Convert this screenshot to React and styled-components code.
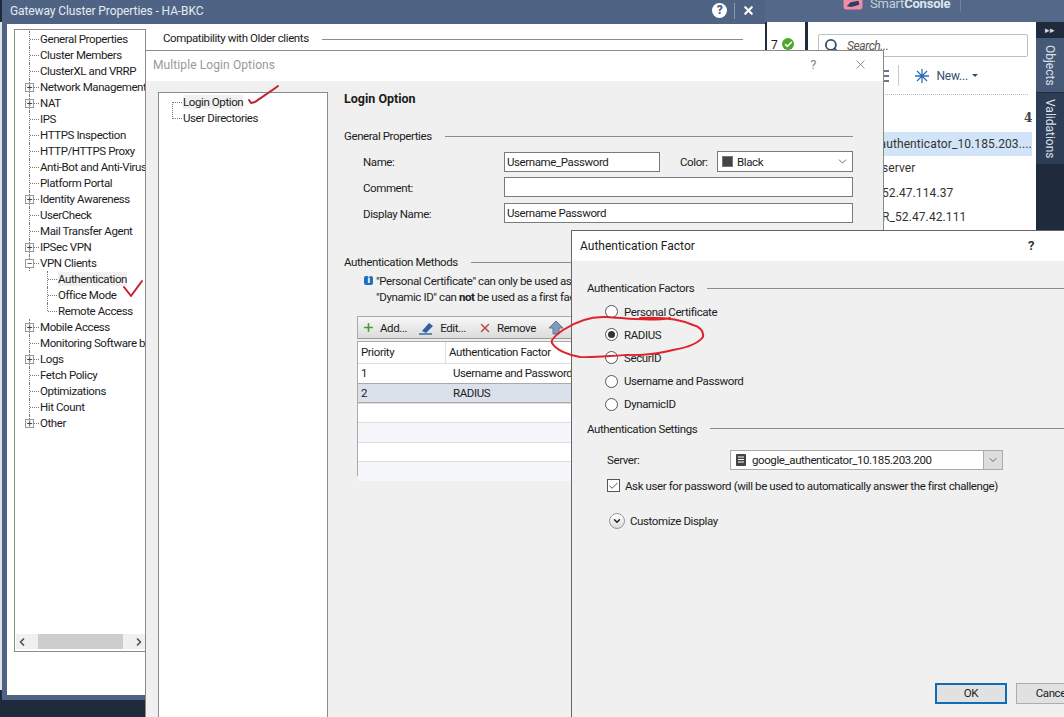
import React from 'react';
import styled, { createGlobalStyle } from 'styled-components';
import { Plus, X, Search, Check, ChevronDown, ChevronLeft, ChevronRight } from 'lucide-react';

const treeItems = [
  { label: 'General Properties' },
  { label: 'Cluster Members' },
  { label: 'ClusterXL and VRRP' },
  { label: 'Network Management', box: '+' },
  { label: 'NAT', box: '+' },
  { label: 'IPS' },
  { label: 'HTTPS Inspection' },
  { label: 'HTTP/HTTPS Proxy' },
  { label: 'Anti-Bot and Anti-Virus' },
  { label: 'Platform Portal' },
  { label: 'Identity Awareness', box: '+' },
  { label: 'UserCheck' },
  { label: 'Mail Transfer Agent' },
  { label: 'IPSec VPN', box: '+' },
  { label: 'VPN Clients', box: '-' },
  { label: 'Authentication', child: true, selected: true },
  { label: 'Office Mode', child: true },
  { label: 'Remote Access', child: true, last: true },
  { label: 'Mobile Access', box: '+' },
  { label: 'Monitoring Software blade' },
  { label: 'Logs', box: '+' },
  { label: 'Fetch Policy' },
  { label: 'Optimizations' },
  { label: 'Hit Count' },
  { label: 'Other', box: '+', last: true },
];

const factors = ['Personal Certificate', 'RADIUS', 'SecurID', 'Username and Password', 'DynamicID'];

const App = () => {
  return (
    <Desktop>
      <GlobalStyle />
      <BackdropEdge />

      <ConsoleWindow>
        <ConsoleHeader>
          <Logo viewBox="0 0 24 14">
            <rect x="0" y="-6" width="24" height="18" rx="3" fill="#f28ca8" />
            <path d="M4 8 L9 3 L19 1 L20 6 L10 9 Z" fill="#2c3f66" />
          </Logo>
          <Brand>Smart<b>Console</b></Brand>
          <HeaderDivider />
        </ConsoleHeader>
        <ConsoleBody>
          <StatusStrip>
            7
            <StatusDot><Check size={9} strokeWidth={4} color="#fff" /></StatusDot>
          </StatusStrip>
          <ObjectsPanel>
            <SearchBox>
              <Search size={15} strokeWidth={3} color="#34506e" />
              <SearchHint>Search...</SearchHint>
            </SearchBox>
            <ObjectsToolbar>
              <ListIcon viewBox="0 0 16 12">
                <path d="M1 1h2M1 6h2M1 11h2M6 1h10M6 6h10M6 11h10" stroke="#34506e" strokeWidth="1.4" />
              </ListIcon>
              <ToolbarDivider />
              <BurstIcon viewBox="0 0 14 14">
                <path d="M7 0v14M0 7h14M2 2l10 10M12 2L2 12" stroke="#2f6fb0" strokeWidth="1.3" />
              </BurstIcon>
              <NewLabel>New...</NewLabel>
              <NewCaret />
            </ObjectsToolbar>
            <CountRow>4</CountRow>
            <ObjectRow $active>google_authenticator_10.185.203....</ObjectRow>
            <ObjectRow>radius_server</ObjectRow>
            <ObjectRow>radius_52.47.114.37</ObjectRow>
            <ObjectRow>radius_R_52.47.42.111</ObjectRow>
          </ObjectsPanel>
          <SideTabs>
            <SideArrows>▸▸</SideArrows>
            <SideTab $active $height={55}>Objects</SideTab>
            <SideTab $height={72}>Validations</SideTab>
          </SideTabs>
        </ConsoleBody>
      </ConsoleWindow>

      <GatewayWindow>
        <GatewayTitleBar>
          <GatewayTitle>Gateway Cluster Properties - HA-BKC</GatewayTitle>
          <TitleActions>
            <HelpCircle>?</HelpCircle>
            <TitleDivider />
            <X size={13} strokeWidth={4} color="#fff" />
          </TitleActions>
        </GatewayTitleBar>
        <GatewayBody>
          <TreePanel>
            <TreeList>
              {treeItems.map((item) => (
                <TreeRow key={item.label} $child={item.child} $last={item.last}>
                  {item.box && <TreeBox>{item.box === '+' ? '+' : '−'}</TreeBox>}
                  <TreeLabel $selected={item.selected}>{item.label}</TreeLabel>
                </TreeRow>
              ))}
            </TreeList>
            <ScrollBar>
              <ChevronLeft size={12} strokeWidth={3.5} color="#555" />
              <ScrollThumb />
              <ChevronRight size={12} strokeWidth={3.5} color="#555" />
            </ScrollBar>
          </TreePanel>
          <GatewayContent>
            <GatewayHeading>Compatibility with Older clients</GatewayHeading>
            <SectionLine />
          </GatewayContent>
        </GatewayBody>
      </GatewayWindow>

      <LoginWindow>
        <WhiteTitleBar $lift={3}>
          <LoginTitle>Multiple Login Options</LoginTitle>
          <LoginActions>
            <span>?</span>
            <X size={15} strokeWidth={1} color="#555" />
          </LoginActions>
        </WhiteTitleBar>
        <LoginBody>
          <LoginTree>
            <LoginTreeRow><LoginTreeLabel $selected>Login Option</LoginTreeLabel></LoginTreeRow>
            <LoginTreeRow><LoginTreeLabel>User Directories</LoginTreeLabel></LoginTreeRow>
          </LoginTree>
          <LoginContent>
            <PageHeading>Login Option</PageHeading>
            <SectionHeader $top={22}>
              General Properties
              <SectionLine />
            </SectionHeader>
            <FormRow $top={7}>
              <FormLabel>Name:</FormLabel>
              <TextField $width={156}>Username_Password</TextField>
              <ColorLabel>Color:</ColorLabel>
              <ColorSelect>
                <Swatch />
                Black
                <ChevronDown size={13} strokeWidth={1.4} color="#444" />
              </ColorSelect>
            </FormRow>
            <FormRow $top={5}>
              <FormLabel>Comment:</FormLabel>
              <TextField />
            </FormRow>
            <FormRow $top={6}>
              <FormLabel>Display Name:</FormLabel>
              <TextField>Username Password</TextField>
            </FormRow>
            <SectionHeader $top={31}>
              Authentication Methods
              <SectionLine />
            </SectionHeader>
            <InfoBlock>
              <InfoIcon>i</InfoIcon>
              <div>
                "Personal Certificate" can only be used as a first factor<br />
                "Dynamic ID" can <b>not</b> be used as a first factor
              </div>
            </InfoBlock>
            <MethodsToolbar>
              <ToolButton>
                <Plus size={13} strokeWidth={3} color="#4d9a35" />
                Add...
              </ToolButton>
              <ToolButton>
                <PencilIcon viewBox="0 0 16 14">
                  <path d="M3 10 L10 2 L14 5 L7 12 Z" fill="#2f5f9e" />
                  <path d="M0 13h13" stroke="#2f5f9e" strokeWidth="1.4" />
                </PencilIcon>
                Edit...
              </ToolButton>
              <ToolButton>
                <X size={14} strokeWidth={2.4} color="#b5483c" />
                Remove
              </ToolButton>
              <UpIcon viewBox="0 0 16 16">
                <path d="M8 1 L15 8 H11 V14 H5 V8 H1 Z" fill="#7f9cc0" stroke="#64748a" />
              </UpIcon>
            </MethodsToolbar>
            <MethodsTable>
              <TableHead>
                <PriorityCell $head>Priority</PriorityCell>
                <FactorCell $head>Authentication Factor</FactorCell>
              </TableHead>
              <TableRow>
                <PriorityCell>1</PriorityCell>
                <FactorCell>Username and Password</FactorCell>
              </TableRow>
              <TableRow $selected>
                <PriorityCell>2</PriorityCell>
                <FactorCell>RADIUS</FactorCell>
              </TableRow>
              <TableRow />
              <TableRow $alt />
              <TableRow />
              <TableRow $alt />
            </MethodsTable>
          </LoginContent>
        </LoginBody>
      </LoginWindow>

      <FactorWindow>
        <WhiteTitleBar $lift={1}>
          <FactorTitle>Authentication Factor</FactorTitle>
          <FactorHelp>?</FactorHelp>
        </WhiteTitleBar>
        <FactorBody>
          <SectionHeader $top={19}>
            Authentication Factors
            <SectionLine />
          </SectionHeader>
          <RadioList>
            {factors.map((name) => (
              <RadioRow key={name}>
                <Radio $checked={name === 'RADIUS'} />
                {name}
              </RadioRow>
            ))}
          </RadioList>
          <SectionHeader $top={5}>
            Authentication Settings
            <SectionLine />
          </SectionHeader>
          <ServerRow>
            <ServerLabel>Server:</ServerLabel>
            <ServerSelect>
              <ServerValue>
                <DocIcon viewBox="0 0 10 12">
                  <rect width="10" height="12" rx="1" fill="#444" />
                  <path d="M2 3h6M2 5.5h6M2 8h6" stroke="#fff" />
                </DocIcon>
                google_authenticator_10.185.203.200
              </ServerValue>
              <ComboButton>
                <ChevronDown size={12} strokeWidth={1.5} color="#444" />
              </ComboButton>
            </ServerSelect>
          </ServerRow>
          <CheckRow>
            <CheckBox>
              <Check size={12} strokeWidth={1.8} color="#333" />
            </CheckBox>
            Ask user for password (will be used to automatically answer the first challenge)
          </CheckRow>
          <CustomizeRow>
            <RoundToggle>
              <ChevronDown size={10} strokeWidth={3.5} color="#222" />
            </RoundToggle>
            Customize Display
          </CustomizeRow>
          <FooterButtons>
            <DialogButton $primary>OK</DialogButton>
            <DialogButton>Cancel</DialogButton>
          </FooterButtons>
        </FactorBody>
      </FactorWindow>

      <InkLayer viewBox="0 0 1064 717">
        <InkPath d="M249 100 L251 103 L255 102 C262 97 270 92 278 86" />
        <InkPath d="M124 287 L131 296 L142 281" />
        <InkPath d="M670 318 C650 322 625 318 607 317 C590 316 575 322 563 330 C556 335 550 340 552 343 C556 350 568 355 580 357 C600 358 620 354 640 355 C655 354 665 352 673 350 C685 348 697 345 703 337 C704 330 698 326 693 325 C680 319 660 317 640 318" $red />
      </InkLayer>
    </Desktop>
  );
};

export default App;

const GlobalStyle = createGlobalStyle`
  html, body {
    margin: 0;
    padding: 0;
    overflow: hidden;
  }
  body {
    font-family: "Roboto", "Open Sans", sans-serif;
    font-size: 11.5px;
    letter-spacing: -0.4px;
    color: #1c1c1c;
  }
`;

const Desktop = styled.div`
  background: #1f2a3c;
  height: 717px;
  overflow: hidden;
  position: relative;
  width: 1064px;
`;

const BackdropEdge = styled.div`
  background: #dfe3e8;
  height: 668px;
  left: 0;
  position: absolute;
  top: 22px;
  width: 2px;
`;

const GatewayWindow = styled.div`
  background: #4f6485;
  display: flex;
  flex-direction: column;
  height: 700px;
  left: 2px;
  padding: 0 0 5px 5px;
  box-sizing: border-box;
  position: absolute;
  top: 0;
  width: 763px;
`;

const GatewayTitleBar = styled.div`
  align-items: center;
  box-sizing: border-box;
  display: flex;
  flex: 0 0 24px;
  justify-content: space-between;
  padding: 0 10px 3px 3px;
`;

const GatewayTitle = styled.div`
  color: #e6ebf1;
  font-size: 12px;
  letter-spacing: -0.1px;
`;

const TitleActions = styled.div`
  align-items: center;
  display: flex;
  gap: 7px;
`;

const HelpCircle = styled.div`
  background: #fff;
  border-radius: 50%;
  color: #4f6485;
  font-size: 12px;
  font-weight: 900;
  height: 15px;
  line-height: 15px;
  text-align: center;
  width: 15px;
`;

const TitleDivider = styled.div`
  background: #8a9ab2;
  height: 16px;
  width: 1px;
`;

const GatewayBody = styled.div`
  background: #fff;
  display: flex;
  flex: 1;
  padding: 5px 0 0 7px;
`;

const TreePanel = styled.div`
  border: 1px solid #8a8a8a;
  box-sizing: border-box;
  display: flex;
  flex-direction: column;
  height: 623px;
  overflow: hidden;
  width: 132px;
`;

const TreeList = styled.div`
  flex: 1;
  padding-top: 1px;
`;

const TreeRow = styled.div`
  align-items: center;
  display: flex;
  height: 16px;
  padding-left: ${(p) => (p.$child ? '43px' : '25px')};
  position: relative;
  white-space: nowrap;

  &::before {
    border-left: 1px dotted #777;
    bottom: ${(p) => (p.$last ? '8px' : '0')};
    content: '';
    left: ${(p) => (p.$child ? '32px' : '14px')};
    position: absolute;
    top: 0;
  }

  &::after {
    border-top: 1px dotted #777;
    content: '';
    left: ${(p) => (p.$child ? '33px' : '15px')};
    position: absolute;
    top: 8px;
    width: 9px;
  }
`;

const TreeBox = styled.span`
  background: #fff;
  border: 1px solid #999;
  box-sizing: border-box;
  color: #345;
  font-size: 10px;
  height: 9px;
  left: 10px;
  line-height: 7px;
  position: absolute;
  text-align: center;
  top: 4px;
  width: 9px;
  z-index: 1;
`;

const TreeLabel = styled.span`
  background: ${(p) => (p.$selected ? '#f0f0f0' : 'transparent')};
`;

const ScrollBar = styled.div`
  align-items: center;
  background: #f0f0f0;
  display: flex;
  flex: 0 0 15px;
  justify-content: space-between;
  margin: 0 0 2px 1px;
`;

const ScrollThumb = styled.div`
  background: #cdcdcd;
  flex: 0 0 85px;
  height: 15px;
`;

const GatewayContent = styled.div`
  align-items: flex-start;
  display: flex;
  flex: 1;
  height: 16px;
  padding: 2px 22px 0 17px;
`;

const GatewayHeading = styled.div`
  white-space: nowrap;
`;

const SectionLine = styled.div`
  align-self: center;
  background: #8c8c8c;
  flex: 1;
  height: 1px;
  margin-left: 13px;
`;

const ConsoleWindow = styled.div`
  background: #1f2a3c;
  display: flex;
  flex-direction: column;
  height: 240px;
  left: 765px;
  position: absolute;
  top: 0;
  width: 299px;
`;

const ConsoleHeader = styled.div`
  align-items: flex-start;
  background: #54698a;
  display: flex;
  flex: 0 0 22px;
  padding-left: 76px;
`;

const Logo = styled.svg`
  height: 11px;
  width: 24px;
`;

const Brand = styled.div`
  color: #c3cfdd;
  font-size: 13px;
  letter-spacing: -0.2px;
  line-height: 8px;
  margin-left: 5px;

  b {
    color: #dfe6ee;
  }
`;

const HeaderDivider = styled.div`
  background: #6f829e;
  height: 12px;
  margin-left: 10px;
  width: 1px;
`;

const ConsoleBody = styled.div`
  display: flex;
  flex: 1;
  padding-left: 2px;
`;

const StatusStrip = styled.div`
  align-items: flex-start;
  background: #fff;
  box-sizing: border-box;
  display: flex;
  flex: 0 0 38px;
  font-size: 12px;
  gap: 5px;
  margin-right: 3px;
  padding: 16px 0 0 4px;
`;

const StatusDot = styled.span`
  align-items: center;
  background: #4ba82a;
  border-radius: 50%;
  display: flex;
  height: 12px;
  justify-content: center;
  width: 12px;
`;

const ObjectsPanel = styled.div`
  background: #fff;
  box-sizing: border-box;
  display: flex;
  flex: 0 0 228px;
  flex-direction: column;
  min-width: 0;
  padding-top: 12px;
`;

const SearchBox = styled.div`
  align-items: center;
  border: 1px solid #b9c0c8;
  border-radius: 2px;
  box-sizing: border-box;
  display: flex;
  gap: 8px;
  height: 23px;
  margin: 0 8px 0 10px;
  padding-left: 5px;
`;

const SearchHint = styled.span`
  color: #555;
  font-size: 12px;
  font-style: italic;
`;

const ObjectsToolbar = styled.div`
  align-items: center;
  border-bottom: 1px dotted #bbb;
  display: flex;
  gap: 7px;
  height: 37px;
  justify-content: flex-end;
  margin: 0 8px 0 10px;
  padding-right: 50px;
`;

const ListIcon = styled.svg`
  height: 12px;
  margin-right: 2px;
  width: 16px;
`;

const ToolbarDivider = styled.div`
  background: #c5cbd2;
  height: 21px;
  margin-right: 9px;
  width: 1px;
`;

const BurstIcon = styled.svg`
  height: 14px;
  width: 14px;
`;

const NewLabel = styled.span`
  color: #34506e;
  font-size: 12px;
  letter-spacing: -0.2px;
`;

const NewCaret = styled.span`
  border-left: 3px solid transparent;
  border-right: 3px solid transparent;
  border-top: 3px solid #34506e;
  margin-left: -3px;
`;

const CountRow = styled.div`
  color: #444;
  font-family: "DejaVu Serif", serif;
  font-size: 12px;
  font-weight: 700;
  height: 37px;
  line-height: 46px;
  padding-right: 4px;
  text-align: right;
`;

const ObjectRow = styled.div`
  background: ${(p) => (p.$active ? '#d2e4f8' : 'transparent')};
  box-sizing: border-box;
  color: #333;
  flex: 0 0 24.4px;
  font-size: 12px;
  letter-spacing: 0.1px;
  line-height: 25px;
  margin-right: 4px;
  overflow: hidden;
  padding-left: ${(p) => (p.$active ? '29px' : '35px')};
  white-space: nowrap;
`;

const SideTabs = styled.div`
  display: flex;
  flex: 1;
  flex-direction: column;
`;

const SideArrows = styled.div`
  color: #d5dce5;
  font-size: 9px;
  height: 16px;
  line-height: 16px;
  text-align: center;
`;

const SideTab = styled.div`
  background: ${(p) => (p.$active ? '#465a78' : '#2c3d55')};
  border-bottom: 1px solid #1f2a3c;
  box-sizing: border-box;
  color: #d9e0e8;
  font-size: 12px;
  height: ${(p) => p.$height}px;
  letter-spacing: 0;
  line-height: 28px;
  text-align: center;
  writing-mode: vertical-rl;
`;

const LoginWindow = styled.div`
  background: #f0f0f0;
  border: 1px solid #8a8a8a;
  box-sizing: border-box;
  display: flex;
  flex-direction: column;
  height: 680px;
  left: 145px;
  position: absolute;
  top: 50px;
  width: 739px;
`;

const WhiteTitleBar = styled.div`
  align-items: center;
  background: #fff;
  box-sizing: border-box;
  display: flex;
  flex: 0 0 30px;
  justify-content: space-between;
  padding-bottom: ${(p) => p.$lift}px;
`;

const LoginTitle = styled.div`
  color: #999;
  font-size: 12px;
  letter-spacing: 0.1px;
  padding-left: 7px;
`;

const LoginActions = styled.div`
  align-items: center;
  color: #888;
  display: flex;
  font-size: 13px;
  gap: 37px;
  padding-right: 15px;
`;

const LoginBody = styled.div`
  display: flex;
  flex: 1;
  padding: 11px 30px 0 12px;
`;

const LoginTree = styled.div`
  background: #fff;
  border: 1px solid #8a8a8a;
  box-sizing: border-box;
  flex: 0 0 170px;
  padding-top: 1px;
`;

const LoginTreeRow = styled.div`
  align-items: center;
  display: flex;
  height: 16px;
  padding-left: 24px;
  position: relative;

  &::before {
    border-left: 1px dotted #777;
    border-top: 1px dotted #777;
    content: '';
    height: 8px;
    left: 13px;
    position: absolute;
    top: 8px;
    width: 9px;
  }

  & + &::before {
    border-left: 1px dotted #777;
    border-top: 0;
    border-bottom: 1px dotted #777;
    top: 0;
  }
`;

const LoginTreeLabel = styled.span`
  background: ${(p) => (p.$selected ? '#f0f0f0' : 'transparent')};
`;

const LoginContent = styled.div`
  display: flex;
  flex: 1;
  flex-direction: column;
  padding-left: 16px;
`;

const PageHeading = styled.div`
  font-size: 12.5px;
  font-weight: 700;
  letter-spacing: 0;
  line-height: 14px;
`;

const SectionHeader = styled.div`
  align-items: center;
  display: flex;
  height: 16px;
  margin-top: ${(p) => p.$top}px;
  white-space: nowrap;
`;

const FormRow = styled.div`
  align-items: center;
  display: flex;
  margin-top: ${(p) => p.$top}px;
  padding-left: 19px;
`;

const FormLabel = styled.div`
  flex: 0 0 141px;
  padding-top: 1px;
`;

const TextField = styled.div`
  background: #fff;
  border: 1px solid #7a7a7a;
  box-sizing: border-box;
  flex: ${(p) => (p.$width ? `0 0 ${p.$width}px` : '1')};
  height: 20px;
  line-height: 18px;
  padding-left: 2px;
`;

const ColorLabel = styled.div`
  flex: 0 0 37px;
  margin-left: 20px;
`;

const ColorSelect = styled.div`
  align-items: center;
  background: #fff;
  border: 1px solid #7a7a7a;
  box-sizing: border-box;
  display: flex;
  flex: 1;
  gap: 4px;
  height: 21px;
  padding: 0 3px;

  svg {
    margin-left: auto;
  }
`;

const Swatch = styled.span`
  background: #444;
  border: 1px solid #777;
  box-sizing: border-box;
  height: 11px;
  margin-left: 1px;
  width: 11px;
`;

const InfoBlock = styled.div`
  display: flex;
  gap: 3px;
  line-height: 16px;
  margin: 3px 0 0 20px;
  white-space: nowrap;
`;

const InfoIcon = styled.span`
  background: #1e6fc0;
  border-radius: 2px;
  color: #fff;
  flex: 0 0 9px;
  font-size: 9px;
  font-weight: 900;
  height: 9px;
  line-height: 9px;
  margin-top: 3px;
  text-align: center;
`;

const MethodsToolbar = styled.div`
  align-items: center;
  background: linear-gradient(#f7f7f7, #dcdcdc);
  border: 1px solid #aaa;
  border-bottom-color: #999;
  box-sizing: border-box;
  display: flex;
  gap: 12px;
  height: 23px;
  margin: 11px 0 0 13px;
  padding-left: 4px;
`;

const ToolButton = styled.div`
  align-items: center;
  display: flex;
  gap: 5px;
`;

const PencilIcon = styled.svg`
  height: 14px;
  width: 16px;
`;

const UpIcon = styled.svg`
  height: 16px;
  width: 16px;
`;

const MethodsTable = styled.div`
  background: #fff;
  border: 1px solid #aaa;
  box-sizing: border-box;
  display: flex;
  flex-direction: column;
  height: 135px;
  margin: 2px 0 0 13px;
`;

const TableHead = styled.div`
  display: flex;
  flex: 0 0 21px;
  line-height: 21px;
`;

const TableRow = styled.div`
  background: ${(p) => (p.$selected ? '#dbe1ea' : p.$alt ? '#f5f7fa' : '#fff')};
  border-top: 1px solid ${(p) => (p.$selected ? '#aaa' : '#ddd')};
  border-bottom: ${(p) => (p.$selected ? '1px solid #aaa' : '0')};
  box-sizing: border-box;
  display: flex;
  flex: 0 0 19.5px;
  line-height: 18px;
`;

const PriorityCell = styled.div`
  border-right: ${(p) => (p.$head ? '1px solid #ddd' : '1px solid transparent')};
  box-sizing: border-box;
  flex: 0 0 88px;
  padding-left: 3px;
`;

const FactorCell = styled.div`
  padding-left: ${(p) => (p.$head ? '3px' : '7px')};
  white-space: nowrap;
`;

const FactorWindow = styled.div`
  background: #f0f0f0;
  border: 1px solid #666;
  border-right: 0;
  box-sizing: border-box;
  display: flex;
  flex-direction: column;
  height: 500px;
  left: 571px;
  position: absolute;
  top: 230px;
  width: 520px;
`;

const FactorTitle = styled.div`
  font-size: 12px;
  letter-spacing: 0;
  padding-left: 8px;
`;

const FactorHelp = styled.div`
  color: #333;
  font-size: 13px;
  font-weight: 700;
  margin-right: 57px;
`;

const FactorBody = styled.div`
  display: flex;
  flex: 1;
  flex-direction: column;
  padding-left: 15px;
`;

const RadioList = styled.div`
  display: flex;
  flex-direction: column;
  padding: 4px 0 0 18px;
`;

const RadioRow = styled.div`
  align-items: center;
  display: flex;
  gap: 6px;
  height: 23.2px;
`;

const Radio = styled.span`
  background: #fff;
  border: 1px solid #555;
  border-radius: 50%;
  box-sizing: border-box;
  height: 13px;
  position: relative;
  width: 13px;

  &::after {
    background: #333;
    border-radius: 50%;
    content: '';
    display: ${(p) => (p.$checked ? 'block' : 'none')};
    height: 7px;
    left: 2px;
    position: absolute;
    top: 2px;
    width: 7px;
  }
`;

const ServerRow = styled.div`
  align-items: center;
  display: flex;
  margin-top: 13px;
  padding-left: 20px;
`;

const ServerLabel = styled.div`
  flex: 0 0 123px;
`;

const ServerSelect = styled.div`
  background: #fff;
  border: 1px solid #aaa;
  box-sizing: border-box;
  display: flex;
  height: 20px;
  width: 273px;
`;

const ServerValue = styled.div`
  align-items: center;
  display: flex;
  flex: 1;
  gap: 6px;
  padding-left: 5px;
`;

const DocIcon = styled.svg`
  height: 12px;
  width: 10px;
`;

const ComboButton = styled.div`
  align-items: center;
  background: #ddd;
  border-left: 1px solid #aaa;
  display: flex;
  flex: 0 0 18px;
  justify-content: center;
`;

const CheckRow = styled.div`
  align-items: center;
  display: flex;
  gap: 5px;
  margin: 9px 0 0 20px;
  white-space: nowrap;
`;

const CheckBox = styled.span`
  align-items: center;
  background: #fff;
  border: 1px solid #555;
  box-sizing: border-box;
  display: flex;
  height: 13px;
  justify-content: center;
  width: 13px;
`;

const CustomizeRow = styled.div`
  align-items: center;
  display: flex;
  gap: 5px;
  margin: 20px 0 0 22px;
`;

const RoundToggle = styled.span`
  align-items: center;
  background: linear-gradient(#fff, #ddd);
  border: 1px solid #999;
  border-radius: 50%;
  box-sizing: border-box;
  display: flex;
  height: 16px;
  justify-content: center;
  width: 16px;
`;

const FooterButtons = styled.div`
  display: flex;
  gap: 9px;
  margin-top: 154px;
  padding-left: 348px;
`;

const DialogButton = styled.div`
  background: #e1e1e1;
  border: ${(p) => (p.$primary ? '2px solid #0f6cb5' : '1px solid #adadad')};
  box-sizing: border-box;
  flex: 0 0 72px;
  height: 21px;
  line-height: ${(p) => (p.$primary ? '17px' : '19px')};
  text-align: center;
`;

const InkLayer = styled.svg`
  height: 717px;
  left: 0;
  pointer-events: none;
  position: absolute;
  top: 0;
  width: 1064px;
`;

const InkPath = styled.path`
  fill: none;
  stroke: ${(p) => (p.$red ? '#e0222a' : '#c5202f')};
  stroke-linecap: round;
  stroke-linejoin: round;
  stroke-width: 2;
`;
